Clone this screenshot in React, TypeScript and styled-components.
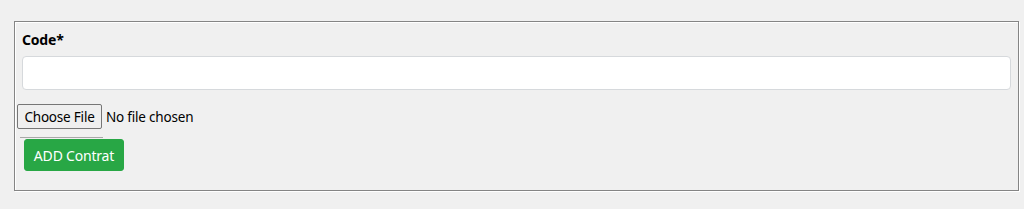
import React from 'react';
import styled, { createGlobalStyle } from 'styled-components';

const GlobalStyle = createGlobalStyle`
  html, body {
    margin: 0;
    padding: 0;
    background: #f0f0f0;
  }
  body {
    font-family: "Noto Sans", "Open Sans", Arial, sans-serif;
    color: #000;
  }
`;

const Page = styled.div`
  padding: 21px 5px 18px 14px;
`;

const Fieldset = styled.div`
  border: 1px solid #858585;
  box-shadow: inset 1px 1px 0 #fff, 1px 1px 0 #fff;
  padding: 9px 7px 18px 7px;
  height: 170px;
  box-sizing: border-box;
`;

const Label = styled.div`
  font-size: 14px;
  font-weight: 700;
  line-height: 18px;
  margin-bottom: 7px;
  letter-spacing: -0.2px;
`;

const TextInput = styled.input`
  display: block;
  width: 100%;
  height: 34px;
  box-sizing: border-box;
  background: #fff;
  border: 1px solid #d6d9dc;
  border-radius: 4px;
  outline: none;
`;

const FileRow = styled.div`
  display: flex;
  align-items: center;
  gap: 4px;
  margin: 14px 0 0 -5px;
`;

const FileButton = styled.button`
  width: 85px;
  height: 25px;
  box-sizing: border-box;
  background: #efefef;
  border: 1px solid #767676;
  border-radius: 2px;
  font-family: inherit;
  font-size: 13.5px;
  color: #000;
  padding: 0;
  letter-spacing: -0.2px;
`;

const FileStatus = styled.span`
  font-size: 13.5px;
  letter-spacing: -0.2px;
`;

const Divider = styled.div`
  width: 83px;
  height: 1px;
  background: #a8a8a8;
  margin: 8px 0 0 -2px;
`;

const SubmitButton = styled.button`
  display: block;
  width: 100px;
  height: 32px;
  margin: 1px 0 0 2px;
  background: #28a745;
  border: 1px solid #28a745;
  border-radius: 3px;
  color: #fff;
  font-family: inherit;
  font-size: 14px;
  padding: 0;
  letter-spacing: -0.2px;
`;

export default function App() {
  return (
    <>
      <GlobalStyle />
      <Page>
        <Fieldset>
          <Label>Code*</Label>
          <TextInput type="text" />
          <FileRow>
            <FileButton type="button">Choose File</FileButton>
            <FileStatus>No file chosen</FileStatus>
          </FileRow>
          <Divider />
          <SubmitButton type="button">ADD Contrat</SubmitButton>
        </Fieldset>
      </Page>
    </>
  );
}
